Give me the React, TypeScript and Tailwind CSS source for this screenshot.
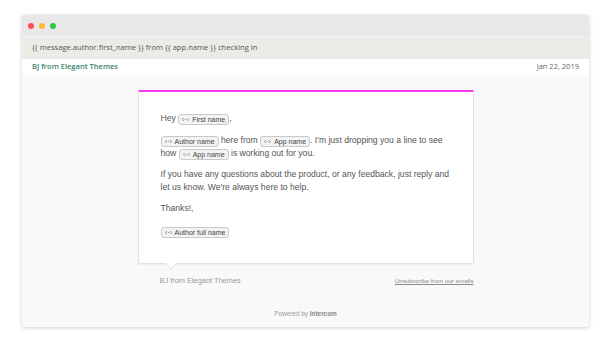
import React from "react";

function Pill({ label }: { label: string }) {
  return (
    <span className="inline-flex h-[11px] items-center gap-[3px] rounded-[3px] border border-[#c9c9c9] bg-[#f3f3f3] px-[3px] align-[-1px] text-[7px] leading-none text-[#444]">
      <svg width="7" height="5" viewBox="0 0 8 5" fill="none" stroke="#777" strokeWidth="0.9">
        <path d="M2 0.8 L0.5 2.5 L2 4.2 M6 0.8 L7.5 2.5 L6 4.2 M3.2 2.5 L4.8 2.5" />
      </svg>
      {label}
    </span>
  );
}

export default function App() {
  return (
    <div className="h-[345px] w-[610px] bg-white pt-[15px] pl-[22px] font-['Liberation_Sans',sans-serif]">
      <div className="flex h-[312px] w-[567px] flex-col overflow-hidden rounded-[2px] bg-[#f9f9f9] shadow-[0_1px_4px_rgba(0,0,0,0.18)]">
        <div className="flex h-[21px] shrink-0 items-center gap-[5px] bg-[#e8e8e8] pl-[6px]">
          <span className="h-[6px] w-[6px] rounded-full bg-[#fc4f5b]" />
          <span className="h-[6px] w-[6px] rounded-full bg-[#fdb92c]" />
          <span className="h-[6px] w-[6px] rounded-full bg-[#2ec940]" />
        </div>
        <div className="flex h-[23px] shrink-0 items-center border-t border-[#f4f4f4] bg-[#ecebe5] pl-[10px] font-['Open_Sans',sans-serif] text-[7.6px] text-[#555]">
          {"{{ message.author.first_name }} from {{ app.name }} checking in"}
        </div>
        <div className="flex h-[16px] shrink-0 items-center justify-between bg-white px-[10px] font-['Open_Sans',sans-serif] text-[7.5px]">
          <span className="font-semibold text-[#3d7f6e]">BJ from Elegant Themes</span>
          <span className="text-[#666]">Jan 22, 2019</span>
        </div>
        <div className="flex flex-1 flex-col items-center pt-[15px]">
          <div className="relative h-[174px] w-[336px] border-x border-b border-[#e3e3e3] border-t-2 border-t-[#f53cf0] bg-white px-[22px] pt-[20px] text-[8.6px] leading-[12.5px] text-[#555] shadow-[0_1px_1px_rgba(0,0,0,0.04)]">
            <p>
              Hey <Pill label="First name" />,
            </p>
            <p className="mt-[9px]">
              <Pill label="Author name" /> here from <Pill label="App name" />. I'm just dropping you a line to see how{" "}
              <Pill label="App name" /> is working out for you.
            </p>
            <p className="mt-[8px]">
              If you have any questions about the product, or any feedback, just reply and let us know. We're always here to help.
            </p>
            <p className="mt-[9px]">Thanks!,</p>
            <p className="mt-[10px]">
              <Pill label="Author full name" />
            </p>
            <span className="absolute -bottom-[5px] left-[28px] h-[8px] w-[8px] rotate-45 border-r border-b border-[#e3e3e3] bg-white" />
          </div>
          <div className="mt-[11px] flex w-[336px] items-center justify-between pl-[22px]">
            <span className="text-[7.4px] text-[#999]">BJ from Elegant Themes</span>
            <span className="text-[6.2px] text-[#888] underline">Unsubscribe from our emails</span>
          </div>
          <div className="mt-[23px] text-[6.4px] text-[#999]">
            Powered by <span className="font-bold text-[#888]">Intercom</span>
          </div>
        </div>
      </div>
    </div>
  );
}
